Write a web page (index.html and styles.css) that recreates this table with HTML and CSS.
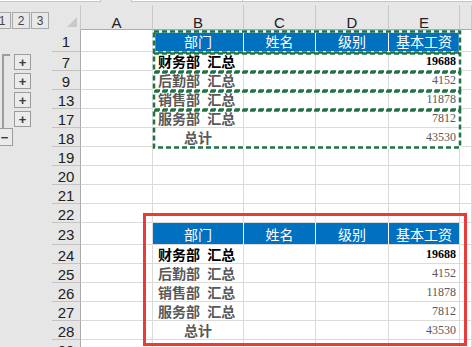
FILE: index.html
```html
<!DOCTYPE html>
<html lang="zh-CN">
<head>
<meta charset="utf-8">
<title>分类汇总</title>
<link rel="stylesheet" href="styles.css">
</head>
<body>
<div class="app">
  <div class="topbar"><div class="namebox"></div><div class="gap"></div><div class="fx"><div class="fxsep"></div></div></div>
  <div class="sheet">
    <!-- column header band -->
    <div class="levels"><span class="lvl">1</span><span class="lvl">2</span><span class="lvl">3</span></div>
    <div class="corner"><span class="tri"></span></div>
    <div class="ch">A</div><div class="ch">B</div><div class="ch">C</div><div class="ch">D</div><div class="ch">E</div><div class="ch blank"></div>

    <!-- row 1 -->
    <div class="ol"></div><div class="rh">1</div><div class="c"></div>
    <div class="c h">部门</div><div class="c h">姓名</div><div class="c h">级别</div><div class="c h last">基本工资</div><div class="c"></div>
    <!-- row 7 -->
    <div class="ol br first"><span class="btn">+</span></div><div class="rh">7</div><div class="c"></div>
    <div class="c t k">财务部 汇总</div><div class="c"></div><div class="c"></div><div class="c n k">19688</div><div class="c"></div>
    <!-- row 9 -->
    <div class="ol br"><span class="btn">+</span></div><div class="rh">9</div><div class="c"></div>
    <div class="c t">后勤部 汇总</div><div class="c"></div><div class="c"></div><div class="c n">4152</div><div class="c"></div>
    <!-- row 13 -->
    <div class="ol br"><span class="btn">+</span></div><div class="rh">13</div><div class="c"></div>
    <div class="c t">销售部 汇总</div><div class="c"></div><div class="c"></div><div class="c n">11878</div><div class="c"></div>
    <!-- row 17 -->
    <div class="ol br"><span class="btn">+</span></div><div class="rh">17</div><div class="c"></div>
    <div class="c t">服务部 汇总</div><div class="c"></div><div class="c"></div><div class="c n">7812</div><div class="c"></div>
    <!-- row 18 -->
    <div class="ol mn"><span class="btn minus">−</span></div><div class="rh">18</div><div class="c"></div>
    <div class="c t ctr">总计</div><div class="c"></div><div class="c"></div><div class="c n">43530</div><div class="c"></div>
    <!-- rows 19-22 -->
    <div class="ol"></div><div class="rh">19</div><div class="c"></div><div class="c"></div><div class="c"></div><div class="c"></div><div class="c"></div><div class="c"></div>
    <div class="ol"></div><div class="rh">20</div><div class="c"></div><div class="c"></div><div class="c"></div><div class="c"></div><div class="c"></div><div class="c"></div>
    <div class="ol"></div><div class="rh">21</div><div class="c"></div><div class="c"></div><div class="c"></div><div class="c"></div><div class="c"></div><div class="c"></div>
    <div class="ol"></div><div class="rh">22</div><div class="c"></div><div class="c"></div><div class="c"></div><div class="c"></div><div class="c"></div><div class="c"></div>
    <!-- row 23 -->
    <div class="ol"></div><div class="rh">23</div><div class="c"></div>
    <div class="c h">部门</div><div class="c h">姓名</div><div class="c h">级别</div><div class="c h last">基本工资</div><div class="c"></div>
    <!-- row 24 -->
    <div class="ol"></div><div class="rh">24</div><div class="c"></div>
    <div class="c t k">财务部 汇总</div><div class="c"></div><div class="c"></div><div class="c n k">19688</div><div class="c"></div>
    <!-- row 25 -->
    <div class="ol"></div><div class="rh">25</div><div class="c"></div>
    <div class="c t">后勤部 汇总</div><div class="c"></div><div class="c"></div><div class="c n">4152</div><div class="c"></div>
    <!-- row 26 -->
    <div class="ol"></div><div class="rh">26</div><div class="c"></div>
    <div class="c t">销售部 汇总</div><div class="c"></div><div class="c"></div><div class="c n">11878</div><div class="c"></div>
    <!-- row 27 -->
    <div class="ol"></div><div class="rh">27</div><div class="c"></div>
    <div class="c t">服务部 汇总</div><div class="c"></div><div class="c"></div><div class="c n">7812</div><div class="c"></div>
    <!-- row 28 -->
    <div class="ol"></div><div class="rh">28</div><div class="c"></div>
    <div class="c t ctr">总计</div><div class="c"></div><div class="c"></div><div class="c n">43530</div><div class="c"></div>
    <!-- row 29 -->
    <div class="ol"></div><div class="rh">29</div><div class="c"></div><div class="c"></div><div class="c"></div><div class="c"></div><div class="c"></div><div class="c"></div>
  </div>

  <svg class="ants" width="472" height="347" viewBox="0 0 472 347">
    <g class="ants-base">
      <rect x="154" y="31.5" width="306" height="21"/>
      <rect x="154" y="53.5" width="306" height="18"/>
      <rect x="154" y="72.5" width="306" height="18"/>
      <rect x="154" y="91.5" width="306" height="18"/>
      <rect x="154" y="110.5" width="306" height="37"/>
    </g>
    <g class="ants-dash">
      <rect x="154" y="31.5" width="306" height="21"/>
      <rect x="154" y="53.5" width="306" height="18"/>
      <rect x="154" y="72.5" width="306" height="18"/>
      <rect x="154" y="91.5" width="306" height="18"/>
      <rect x="154" y="110.5" width="306" height="37"/>
    </g>
  </svg>
  <div class="mark"></div>
</div>
</body>
</html>
```
FILE: styles.css
```css
* { box-sizing: border-box; }
html, body { margin: 0; padding: 0; }
body {
  width: 472px;
  height: 347px;
  overflow: hidden;
  background: #e6e6e6;
  font-family: "Liberation Sans", Arial, sans-serif;
}
.app {
  position: relative;
  width: 472px;
  height: 347px;
  overflow: hidden;
  background: #e6e6e6;
}

/* remnant of name box / formula bar */
.topbar { display: flex; height: 2px; }
.namebox {
  width: 101px;
  background: #fff;
  border-right: 1px solid #c6c6c6;
  border-bottom: 1px solid #c6c6c6;
}
.gap { width: 30px; }
.fx {
  flex: 1;
  background: #fff;
  border-left: 1px solid #c6c6c6;
  border-bottom: 1px solid #c6c6c6;
  display: flex;
}
.fxsep { width: 111px; border-right: 1px solid #c6c6c6; }

/* sheet grid */
.sheet {
  display: grid;
  grid-template-columns: 52px 29px 72px 91px 72px 73px 71px 1fr;
  grid-template-rows: 28px 22px repeat(9, 19px) 22px repeat(5, 19px) 19px;
}

.levels {
  display: flex;
  gap: 1px;
  margin-left: -7px;
  padding-top: 10px;
  align-items: flex-start;
}
.lvl {
  width: 18px;
  height: 17px;
  border: 1px solid #a8a8a8;
  background: #e8e8e8;
  display: flex;
  align-items: center;
  justify-content: center;
  font-size: 12px;
  color: #444;
}

.corner {
  display: flex;
  align-items: flex-end;
  justify-content: flex-end;
  padding: 0 3px 3px 0;
  margin-top: 3px;
  border-right: 1px solid #c8c8c8;
}
.tri {
  width: 0;
  height: 0;
  border-left: 10px solid transparent;
  border-bottom: 10px solid #c9c9c9;
}

.ch {
  margin-top: 3px;
  border-right: 1px solid #c8c8c8;
  border-bottom: 1px solid #ababab;
  display: flex;
  align-items: flex-end;
  justify-content: center;
  font-size: 15px;
  line-height: 13px;
  color: #222;
}

.rh {
  border-right: 1px solid #ababab;
  border-bottom: 1px solid #c3c3c3;
  display: flex;
  align-items: center;
  justify-content: center;
  padding-top: 2px;
  font-size: 15px;
  line-height: 15px;
  color: #222;
}

/* outline (grouping) column */
.ol {
  position: relative;
  display: flex;
  align-items: flex-start;
  padding-left: 14px;
  padding-top: 2px;
}
.ol.br::before {
  content: "";
  position: absolute;
  left: 2px;
  top: 0;
  bottom: 0;
  width: 2px;
  background: #9d9d9d;
}
.ol.br.first::before {
  top: 2px;
  width: 6px;
  background: none;
  border-left: 2px solid #9d9d9d;
  border-top: 2px solid #9d9d9d;
}
.ol.mn { padding-left: 0; padding-top: 0; }
.btn {
  width: 17px;
  height: 16px;
  border: 1px solid #9c9c9c;
  background: #ebebeb;
  display: flex;
  align-items: center;
  justify-content: center;
  font-weight: 700;
  font-size: 13px;
  line-height: 1;
  color: #3a3a3a;
}
.btn.minus {
  margin-left: -4px;
  height: 18px;
}

/* cells */
.c {
  background: #fff;
  border-right: 1px solid #dadada;
  border-bottom: 1px solid #dadada;
  display: flex;
  align-items: center;
  white-space: nowrap;
  overflow: hidden;
}
.h {
  background: #0070c0;
  color: #fff;
  justify-content: center;
  border-right-color: #fff;
  font-family: "Noto Sans CJK SC", sans-serif;
  font-size: 14px;
  line-height: 16px;
}
.h.last { border-right-color: #dadada; }
.t {
  font-family: "Noto Sans CJK SC", sans-serif;
  font-weight: 700;
  font-size: 14px;
  line-height: 16px;
  color: #595959;
  padding-left: 5px;
  word-spacing: 4px;
}
.t.k { color: #000; }
.t.ctr { justify-content: center; padding-left: 0; }
.n {
  justify-content: flex-end;
  padding-right: 3px;
  font-family: "Liberation Serif", "Times New Roman", serif;
  font-size: 12px;
  line-height: 14px;
  color: #595959;
}
.n.k { color: #000; font-weight: 700; }

/* copy marquee overlay */
.ants {
  position: absolute;
  left: 0;
  top: 0;
  pointer-events: none;
}
.ants rect { fill: none; }
.ants-base rect { stroke: #fff; stroke-width: 2.5; }
.ants-dash rect { stroke: #217346; stroke-width: 2.5; stroke-dasharray: 5 3; }

/* red annotation box */
.mark {
  position: absolute;
  left: 143px;
  top: 213px;
  width: 324px;
  height: 133px;
  border: 3px solid #ea3b3b;
  pointer-events: none;
}
```
